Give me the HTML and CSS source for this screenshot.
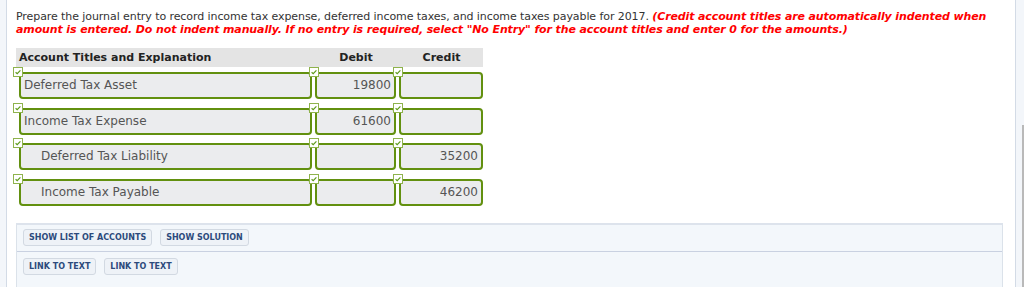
FILE: index.html
```html
<!DOCTYPE html>
<html lang="en">
<head>
  <meta charset="UTF-8">
  <title>Journal Entry</title>
  <link rel="stylesheet" href="styles.css">
</head>
<body>
  <div class="page">
    <div class="gutter"></div>

    <div class="main">
      <p class="question">
        Prepare the journal entry to record income tax expense, deferred income taxes, and income taxes payable for 2017.
        <span class="note">(Credit account titles are automatically indented when amount is entered. Do not indent manually. If no entry is required, select "No Entry" for the account titles and enter 0 for the amounts.)</span>
      </p>

      <div class="journal">
        <div class="journal-head">
          <div class="col-title">Account Titles and Explanation</div>
          <div class="col-amt">Debit</div>
          <div class="col-amt">Credit</div>
        </div>

        <div class="journal-row">
          <div class="cell"><span class="check"><svg viewBox="0 0 8 8"><path d="M1.6 4.2 L3.2 5.6 L6.4 2.3"/></svg></span><div class="field">Deferred Tax Asset</div></div>
          <div class="cell"><span class="check"><svg viewBox="0 0 8 8"><path d="M1.6 4.2 L3.2 5.6 L6.4 2.3"/></svg></span><div class="field num">19800</div></div>
          <div class="cell"><span class="check"><svg viewBox="0 0 8 8"><path d="M1.6 4.2 L3.2 5.6 L6.4 2.3"/></svg></span><div class="field num"></div></div>
        </div>
        <div class="journal-row">
          <div class="cell"><span class="check"><svg viewBox="0 0 8 8"><path d="M1.6 4.2 L3.2 5.6 L6.4 2.3"/></svg></span><div class="field">Income Tax Expense</div></div>
          <div class="cell"><span class="check"><svg viewBox="0 0 8 8"><path d="M1.6 4.2 L3.2 5.6 L6.4 2.3"/></svg></span><div class="field num">61600</div></div>
          <div class="cell"><span class="check"><svg viewBox="0 0 8 8"><path d="M1.6 4.2 L3.2 5.6 L6.4 2.3"/></svg></span><div class="field num"></div></div>
        </div>
        <div class="journal-row">
          <div class="cell"><span class="check"><svg viewBox="0 0 8 8"><path d="M1.6 4.2 L3.2 5.6 L6.4 2.3"/></svg></span><div class="field indent">Deferred Tax Liability</div></div>
          <div class="cell"><span class="check"><svg viewBox="0 0 8 8"><path d="M1.6 4.2 L3.2 5.6 L6.4 2.3"/></svg></span><div class="field num"></div></div>
          <div class="cell"><span class="check"><svg viewBox="0 0 8 8"><path d="M1.6 4.2 L3.2 5.6 L6.4 2.3"/></svg></span><div class="field num">35200</div></div>
        </div>
        <div class="journal-row">
          <div class="cell"><span class="check"><svg viewBox="0 0 8 8"><path d="M1.6 4.2 L3.2 5.6 L6.4 2.3"/></svg></span><div class="field indent">Income Tax Payable</div></div>
          <div class="cell"><span class="check"><svg viewBox="0 0 8 8"><path d="M1.6 4.2 L3.2 5.6 L6.4 2.3"/></svg></span><div class="field num"></div></div>
          <div class="cell"><span class="check"><svg viewBox="0 0 8 8"><path d="M1.6 4.2 L3.2 5.6 L6.4 2.3"/></svg></span><div class="field num">46200</div></div>
        </div>
      </div>

      <div class="tools">
        <div class="tool-row">
          <button class="btn">Show List of Accounts</button>
          <button class="btn">Show Solution</button>
        </div>
        <div class="tool-row">
          <button class="btn">Link to Text</button>
          <button class="btn">Link to Text</button>
        </div>
      </div>
    </div>

    <div class="rail"><div class="thumb"></div></div>
  </div>
</body>
</html>
```

FILE: styles.css
```css
body {
  margin: 0;
  padding: 0;
  background-color: white;
  font-family: 'DejaVu Sans', Verdana, sans-serif;
  color: #333;
  overflow: hidden;
}
.page {
  display: flex;
  height: 287px;
}
.gutter {
  width: 6px;
  background-color: #f3f6fa;
  border-right: 1px solid #d3dbe6;
}
.main {
  flex: 1;
  padding: 10px 0 0 9px;
}
.rail {
  width: 8px;
  background-color: #f3f6fa;
  border-left: 1px solid #d3dbe6;
  display: flex;
  justify-content: flex-end;
}
.thumb {
  width: 2px;
  margin-top: 125px;
  background-color: #b9b9b9;
}
.question {
  margin: 0 0 12px 0;
  font-size: 11px;
  line-height: 13px;
  letter-spacing: -0.08px;
  color: #333;
}
.note {
  color: #f00;
  font-weight: bold;
  font-style: italic;
  letter-spacing: -0.12px;
}
.journal {
  width: 467px;
}
.journal-head {
  display: grid;
  grid-template-columns: 296px 84px 87px;
  height: 19px;
  align-items: center;
  background-color: #e4e4e4;
  font-size: 11px;
  font-weight: bold;
  color: #222;
}
.col-title {
  padding-left: 3px;
}
.col-amt {
  text-align: center;
  padding-left: 4px;
}
.journal-row {
  display: grid;
  grid-template-columns: 296px 84px 87px;
  height: 35.5px;
}
.journal-row:first-of-type {
  margin-top: 1px;
}
.cell {
  position: relative;
  padding: 5px 0 0 3px;
}
.check {
  position: absolute;
  left: -3px;
  top: 0;
  width: 8px;
  height: 8px;
  background-color: white;
  border: 1px solid #8fb34d;
}
.check svg {
  display: block;
  width: 8px;
  height: 8px;
}
.check path {
  fill: none;
  stroke: #5e9a1a;
  stroke-width: 1.2;
}
.field {
  box-sizing: border-box;
  height: 27px;
  border: 2px solid #62900f;
  border-radius: 4px;
  background-color: #ebecee;
  color: #555;
  font-size: 12px;
  line-height: 23px;
  padding: 0 3px;
  white-space: nowrap;
}
.field.num {
  text-align: right;
}
.field.indent {
  padding-left: 20px;
}
.tools {
  margin-top: 14px;
  width: 987px;
  box-sizing: border-box;
  background-color: #f3f7fb;
  border: 1px solid #dbe2ea;
  border-top: 2px solid #dde3ec;
  height: 70px;
}
.tool-row {
  display: flex;
  gap: 8px;
  padding: 4px 6px 5px 6px;
  height: 17px;
}
.tool-row + .tool-row {
  border-top: 1px solid #c9d1e1;
  padding-top: 6px;
}
.btn {
  font-family: 'DejaVu Sans', Verdana, sans-serif;
  font-size: 8px;
  font-weight: bold;
  text-transform: uppercase;
  color: #2c4a7c;
  background-color: #eef2f7;
  border: 1px solid #d2d9e2;
  border-radius: 3px;
  padding: 0 5px;
  height: 17px;
  cursor: pointer;
}
```
